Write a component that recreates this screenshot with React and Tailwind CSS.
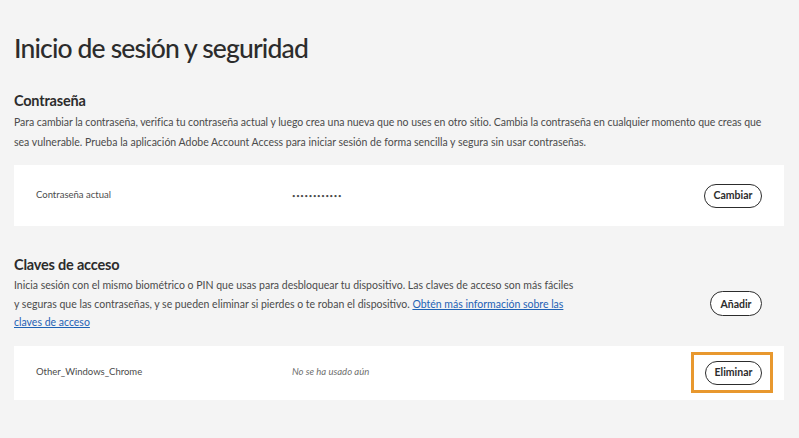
import React from "react";

const font = { fontFamily: "Lato, 'Noto Sans', sans-serif" };

function PillButton({ children, w }) {
  return (
    <button
      className={`h-[24px] rounded-full border-[1.5px] border-[#2c2c2c] bg-white text-[10.5px] font-bold text-[#2c2c2c] leading-none flex items-center justify-center ${w}`}
    >
      {children}
    </button>
  );
}

export default function App() {
  return (
    <div
      className="w-[799px] h-[438px] bg-[#f4f4f4] pl-[14px] pr-[15px] pt-[32px] overflow-hidden"
      style={font}
    >
      <h1 className="text-[26.5px] leading-[32px] font-medium text-[#2c2c2c] tracking-[-0.85px] whitespace-nowrap">
        Inicio de sesión y seguridad
      </h1>

      <h2 className="mt-[26px] text-[14.5px] leading-[22px] font-bold text-[#2c2c2c] tracking-[-0.2px] whitespace-nowrap">
        Contraseña
      </h2>
      <p className="text-[10.5px] leading-[20px] text-[#4b4b4b] whitespace-nowrap">
        <span className="tracking-[-0.05px]">
          Para cambiar la contraseña, verifica tu contraseña actual y luego crea una nueva que no uses en otro sitio. Cambia la contraseña en cualquier momento que creas que
        </span>
        <br />
        sea vulnerable. Prueba la aplicación Adobe Account Access para iniciar sesión de forma sencilla y segura sin usar contraseñas.
      </p>

      <div className="mt-[13px] h-[61px] bg-white flex items-center pl-[22px] pr-[22px]">
        <div className="w-[256px] text-[9.5px] text-[#4b4b4b] whitespace-nowrap">Contraseña actual</div>
        <div className="flex-1 text-[6px] tracking-[0.7px] text-[#4b4b4b] leading-none">••••••••••••</div>
        <PillButton w="w-[58px]">Cambiar</PillButton>
      </div>

      <h2 className="mt-[28px] text-[14.5px] leading-[22px] font-bold text-[#2c2c2c] tracking-[-0.2px] whitespace-nowrap">
        Claves de acceso
      </h2>
      <div className="flex items-center justify-between pr-[22px]">
        <p className="text-[10.5px] leading-[18.5px] text-[#4b4b4b] whitespace-nowrap">
          Inicia sesión con el mismo biométrico o PIN que usas para desbloquear tu dispositivo. Las claves de acceso son más fáciles
          <br />
          y seguras que las contraseñas, y se pueden eliminar si pierdes o te roban el dispositivo.{" "}
          <a className="text-[#1f62b5] underline">Obtén más información sobre las</a>
          <br />
          <a className="text-[#1f62b5] underline">claves de acceso</a>
        </p>
        <PillButton w="w-[52px] h-[25px]">Añadir</PillButton>
      </div>

      <div className="mt-[14px] h-[54px] bg-white flex items-center pl-[22px] pr-[22px]">
        <div className="w-[256px] text-[9.5px] text-[#4b4b4b] whitespace-nowrap">Other_Windows_Chrome</div>
        <div className="flex-1 text-[9.5px] italic text-[#707070] whitespace-nowrap">No se ha usado aún</div>
        <div className="relative">
          <PillButton w="w-[57px]">Eliminar</PillButton>
          <div className="absolute -left-[14px] -top-[9px] w-[82px] h-[41px] border-[3px] border-[#e8982e] pointer-events-none" />
        </div>
      </div>
    </div>
  );
}
